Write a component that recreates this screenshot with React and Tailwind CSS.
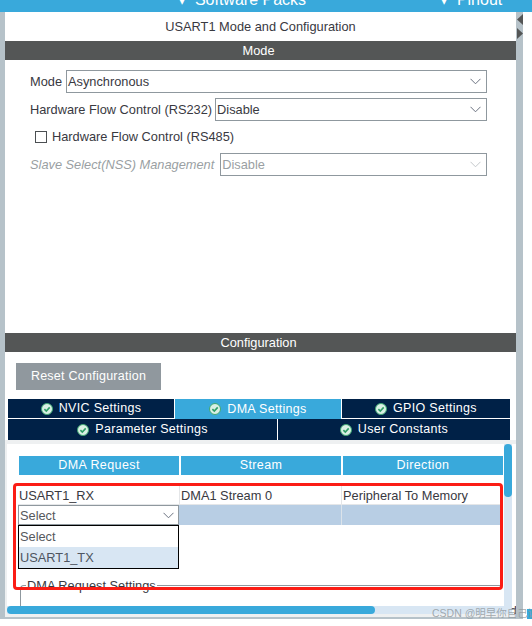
const FONT = "font-['Liberation_Sans',Arial,sans-serif]";

function Chevron({ className = "text-[#6b7280]" }) {
  return (
    <svg width="11" height="7" viewBox="0 0 11 7" fill="none" className={className}>
      <path d="M0.5 0.8L5.5 5.8L10.5 0.8" stroke="currentColor" strokeWidth="1" />
    </svg>
  );
}

function CheckBadge() {
  return (
    <svg width="12" height="12" viewBox="0 0 12 12" fill="none" className="shrink-0">
      <circle cx="6" cy="6" r="5.5" fill="#d9f0e4" stroke="#3fa873" />
      <path d="M3.4 6.1l1.9 1.9 3.4-3.6" stroke="#2f9e66" strokeWidth="1.6" />
    </svg>
  );
}

function Select({ value, disabled }) {
  return (
    <div className={`flex-1 h-[23px] border border-[#8f989e] flex items-center justify-between pl-[1px] pr-[5px] ${disabled ? "text-[#9a9fa3]" : "text-[#39393f]"}`}>
      <span>{value}</span>
      <Chevron className={disabled ? "text-[#c4c8cb]" : "text-[#6b7280]"} />
    </div>
  );
}

function Tab({ label, active, className }) {
  return (
    <div className={`${className} ${active ? "bg-[#39a9db]" : "bg-[#002147]"} flex items-center justify-center gap-[6px] text-white text-[12.5px] tracking-[0.3px]`}>
      <CheckBadge />
      <span>{label}</span>
    </div>
  );
}

function HeaderCell({ label }) {
  return (
    <div className="w-[160px] h-[19px] bg-[#39a9db] text-white text-[12.5px] tracking-[0.4px] flex items-center justify-center">
      {label}
    </div>
  );
}

function SectionBar({ label }) {
  return (
    <div className="h-[19px] bg-[#545656] text-white text-[12.8px] pr-[4px] flex items-center justify-center">{label}</div>
  );
}

export default function App() {
  return (
    <div className={`${FONT} relative w-[532px] h-[626px] bg-white overflow-hidden text-[12.8px]`}>
      {/* top bar */}
      <div className="h-[12px] bg-[#39a9db] text-white text-[16px] overflow-hidden relative">
        <span className="absolute left-[178px] top-[-12px] whitespace-nowrap">▾&nbsp; Software Packs</span>
        <span className="absolute left-[440px] top-[-12px] whitespace-nowrap">▾&nbsp; Pinout</span>
      </div>

      <div className="flex h-[607px]">
        <div className="w-[5px] bg-[#b6c2c9] shrink-0" />

        {/* main panel */}
        <div className="w-[511px] shrink-0 flex flex-col">
          <div className="h-[29px] flex items-center justify-center text-[#39393f]">
            USART1 Mode and Configuration
          </div>
          <SectionBar label="Mode" />

          <div className="h-[273px] pl-[25px] pr-[29px] pt-[10px] text-[#39393f]">
            <div className="flex items-center gap-[4px] h-[23px]">
              <span>Mode</span>
              <Select value="Asynchronous" />
            </div>
            <div className="flex items-center gap-[3px] h-[23px] mt-[5px]">
              <span>Hardware Flow Control (RS232)</span>
              <Select value="Disable" />
            </div>
            <div className="flex items-center gap-[5px] h-[23px] mt-[4px] pl-[5px]">
              <span className="w-[12px] h-[12px] border border-[#4b4f52] bg-white" />
              <span>Hardware Flow Control (RS485)</span>
            </div>
            <div className="flex items-center gap-[6px] h-[23px] mt-[5px]">
              <span className="italic text-[#9a9fa3]">Slave Select(NSS) Management</span>
              <Select value="Disable" disabled />
            </div>
          </div>

          <SectionBar label="Configuration" />

          <div className="pl-[11px] pt-[11px]">
            <div className="w-[145px] h-[27px] bg-[#90989e] text-white text-[12.5px] tracking-[0.25px] flex items-center justify-center">
              Reset Configuration
            </div>
          </div>

          {/* tabs */}
          <div className="pl-[3px] pr-[6px] mt-[9px]">
            <div className="flex h-[20px] gap-[1px] items-start">
              <Tab label="NVIC Settings" className="w-[166px] h-[19px]" />
              <Tab label="DMA Settings" active className="w-[166px] h-[20px]" />
              <Tab label="GPIO Settings" className="flex-1 h-[19px]" />
            </div>
            <div className="flex h-[21px] gap-[1px]">
              <Tab label="Parameter Settings" className="w-[269px]" />
              <Tab label="User Constants" className="flex-1" />
            </div>
          </div>

          {/* tab content */}
          <div className="flex-1 min-h-0 bg-[#eef0f1] pl-[2px] pt-[4px] pb-[3px] flex flex-col">
            <div className="flex-1 min-h-0 bg-white relative overflow-hidden">
              <div className="pl-[12px] pt-[12px] flex gap-[2px]">
                <HeaderCell label="DMA Request" />
                <HeaderCell label="Stream" />
                <HeaderCell label="Direction" />
              </div>

              <div className="pl-[11px] mt-[11px] w-[493px] text-[#39393f]">
                <div className="flex h-[19px] border-b border-[#e4e6e8]">
                  <div className="w-[162px] border-r border-[#e4e6e8] pl-[1px] pt-[1px] flex items-center">USART1_RX</div>
                  <div className="w-[162px] border-r border-[#e4e6e8] pl-[1px] pt-[1px] flex items-center">DMA1 Stream 0</div>
                  <div className="flex-1 pl-[1px] pt-[1px] flex items-center">Peripheral To Memory</div>
                </div>
                <div className="flex h-[20px] bg-[#b8cee4]">
                  <div className="w-[161px] bg-white border border-[#8f989e] flex items-center justify-between pl-[1px] pr-[4px] pt-[1px] text-[#55585c]">
                    <span>Select</span>
                    <Chevron />
                  </div>
                  <div className="w-[162px] ml-[1px] border-r border-[#dbe3ea]" />
                  <div className="flex-1" />
                </div>
                <div className="w-[161px] h-[44px] border border-black bg-white">
                  <div className="h-[21px] pl-[1px] flex items-center text-[#55585c]">Select</div>
                  <div className="h-[21px] pl-[1px] bg-[#d8e6f3] flex items-center text-[#4e5560]">USART1_TX</div>
                </div>
              </div>

              {/* fieldset, runs under the scrollbar */}
              <div className="ml-[13px] mt-[16px] w-[482px] h-[40px] border-l border-t border-[#8f989e] rounded-tl-[4px] relative">
                <span className="absolute left-[5px] top-[-8px] bg-white px-[1px] leading-[15px] text-[#39393f] whitespace-nowrap">DMA Request Settings</span>
              </div>
              <span className="absolute left-[463px] top-[159px] leading-[16px] text-[#39393f]">Enabled</span>

              {/* annotation */}
              <div className="absolute left-[6px] top-[39px] w-[490px] h-[107px] border-[3px] border-[#fb1d15] rounded-[4px]" />

              {/* scrollbars */}
              <div className="absolute left-[497px] top-0 bottom-[8px] w-[8px] bg-[#d8e6f3]">
                <div className="w-[8px] h-[53px] bg-[#39a9db] rounded-full" />
              </div>
              <div className="absolute left-0 w-[505px] bottom-0 h-[8px] bg-[#d8e6f3]">
                <div className="w-[368px] h-[8px] bg-[#39a9db] rounded-full" />
              </div>
            </div>
          </div>
          <div className="h-[2px] bg-[#b6c2c9] shrink-0" />
        </div>

        <div className="w-[7px] bg-[#b6c2c9] shrink-0 flex flex-col items-center">
          <svg width="6" height="28" viewBox="0 0 6 28" className="mt-[1px]">
            <path d="M6 1L0 6.5L6 12Z" fill="#545656" />
            <path d="M0 15L6 20.5L0 26Z" fill="#545656" />
          </svg>
        </div>
        <div className="flex-1 flex flex-col">
          <div className="flex-1" />
          <div className="h-[10px] ml-[4px] bg-[#39a9db]" />
        </div>
      </div>

      {/* watermark */}
      <span className="absolute left-[432px] top-[606px] text-[10.5px] text-[#8f969b]/80 whitespace-nowrap font-['Liberation_Sans','Noto_Sans_CJK_SC',sans-serif]">CSDN @明早你自己说</span>
    </div>
  );
}
